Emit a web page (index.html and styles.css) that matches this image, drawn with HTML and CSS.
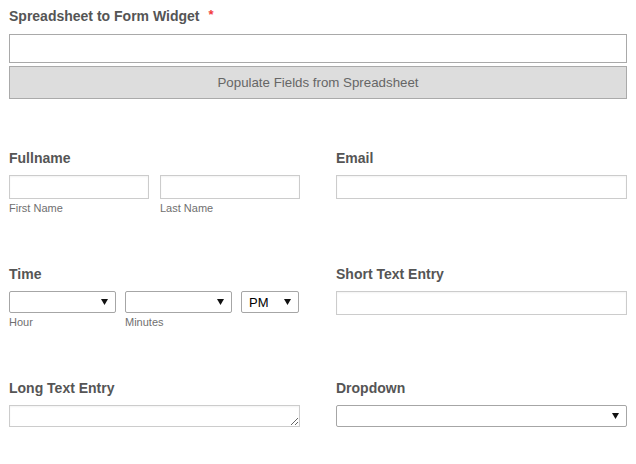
FILE: index.html
```html
<!DOCTYPE html>
<html>
<head>
<meta charset="utf-8">
<link rel="stylesheet" href="styles.css">
</head>
<body>
<div class="form">
  <div class="widget">
    <div class="label">Spreadsheet to Form Widget<span class="req">*</span></div>
    <div class="wide-input"></div>
    <div class="populate">Populate Fields from Spreadsheet</div>
  </div>

  <div class="row">
    <div class="field">
      <div class="label">Fullname</div>
      <div class="pair">
        <div class="sub">
          <input class="text" type="text">
          <div class="sublabel">First Name</div>
        </div>
        <div class="sub">
          <input class="text" type="text">
          <div class="sublabel">Last Name</div>
        </div>
      </div>
    </div>
    <div class="field">
      <div class="label">Email</div>
      <input class="text" type="text">
    </div>
  </div>

  <div class="row">
    <div class="field">
      <div class="label">Time</div>
      <div class="time">
        <div class="sub hour">
          <div class="select"><span class="val"></span><svg class="arrow" width="7" height="6" viewBox="0 0 7 6"><polygon points="0,0 7,0 3.5,6" fill="#111"/></svg></div>
          <div class="sublabel">Hour</div>
        </div>
        <div class="sub minutes">
          <div class="select"><span class="val"></span><svg class="arrow" width="7" height="6" viewBox="0 0 7 6"><polygon points="0,0 7,0 3.5,6" fill="#111"/></svg></div>
          <div class="sublabel">Minutes</div>
        </div>
        <div class="sub ampm">
          <div class="select"><span class="val">PM</span><svg class="arrow" width="7" height="6" viewBox="0 0 7 6"><polygon points="0,0 7,0 3.5,6" fill="#111"/></svg></div>
        </div>
      </div>
    </div>
    <div class="field">
      <div class="label">Short Text Entry</div>
      <input class="text" type="text">
    </div>
  </div>

  <div class="row">
    <div class="field">
      <div class="label">Long Text Entry</div>
      <textarea class="area"></textarea>
    </div>
    <div class="field">
      <div class="label">Dropdown</div>
      <div class="select"><span class="val"></span><svg class="arrow" width="7" height="6" viewBox="0 0 7 6"><polygon points="0,0 7,0 3.5,6" fill="#111"/></svg></div>
    </div>
  </div>
</div>
</body>
</html>
```

FILE: styles.css
```css
html, body {
  margin: 0;
  padding: 0;
  background: #fff;
}

body {
  font-family: "Liberation Sans", Arial, sans-serif;
  width: 636px;
  height: 464px;
  overflow: hidden;
}

.form {
  padding: 8px 9px 0 9px;
}

.label {
  font-size: 14px;
  font-weight: bold;
  line-height: 16px;
  color: #555;
  margin-bottom: 9px;
}

.req {
  color: #f23a3c;
  font-size: 13px;
  margin-left: 9px;
  position: relative;
  top: -2px;
}

.wide-input {
  box-sizing: border-box;
  height: 29px;
  border: 1px solid #a9a9a9;
  background: #fff;
}

.populate {
  box-sizing: border-box;
  margin-top: 3px;
  height: 33px;
  border: 1px solid #aaa;
  background: #ddd;
  color: #666;
  font-size: 13.3px;
  display: flex;
  align-items: center;
  justify-content: center;
}

.row {
  display: grid;
  grid-template-columns: 291px 291px;
  column-gap: 36px;
  margin-top: 51px;
  align-items: start;
}

.field {
  display: flex;
  flex-direction: column;
}

.pair {
  display: flex;
  gap: 11px;
}

.sub {
  display: flex;
  flex-direction: column;
}

.pair .sub {
  width: 140px;
}

.text {
  box-sizing: border-box;
  display: block;
  width: 100%;
  height: 24px;
  margin: 0;
  padding: 0 4px;
  border: 1px solid #ccc;
  background: #fff;
  box-shadow: inset 0 1px 2px rgba(0, 0, 0, 0.05);
  outline: none;
}

.sublabel {
  font-size: 11px;
  line-height: 13px;
  color: #6f6f6f;
  margin-top: 3px;
}

.time {
  display: flex;
  gap: 9px;
}

.hour {
  width: 107px;
}

.minutes {
  width: 107px;
}

.ampm {
  width: 58px;
}

.select {
  box-sizing: border-box;
  height: 22px;
  border: 1px solid #a6a6a6;
  border-radius: 2px;
  background: #fff;
  display: flex;
  align-items: center;
  justify-content: space-between;
  padding: 0 7px 0 7px;
  font-size: 13px;
  color: #000;
}

.time .sublabel {
  margin-top: 3px;
}

.arrow {
  display: block;
  flex: none;
}

.area {
  box-sizing: border-box;
  display: block;
  width: 291px;
  height: 22px;
  margin: 0;
  padding: 0;
  border: 1px solid #ccc;
  background: #fff;
  box-shadow: inset 0 1px 2px rgba(0, 0, 0, 0.05);
  resize: both;
  outline: none;
}
```
